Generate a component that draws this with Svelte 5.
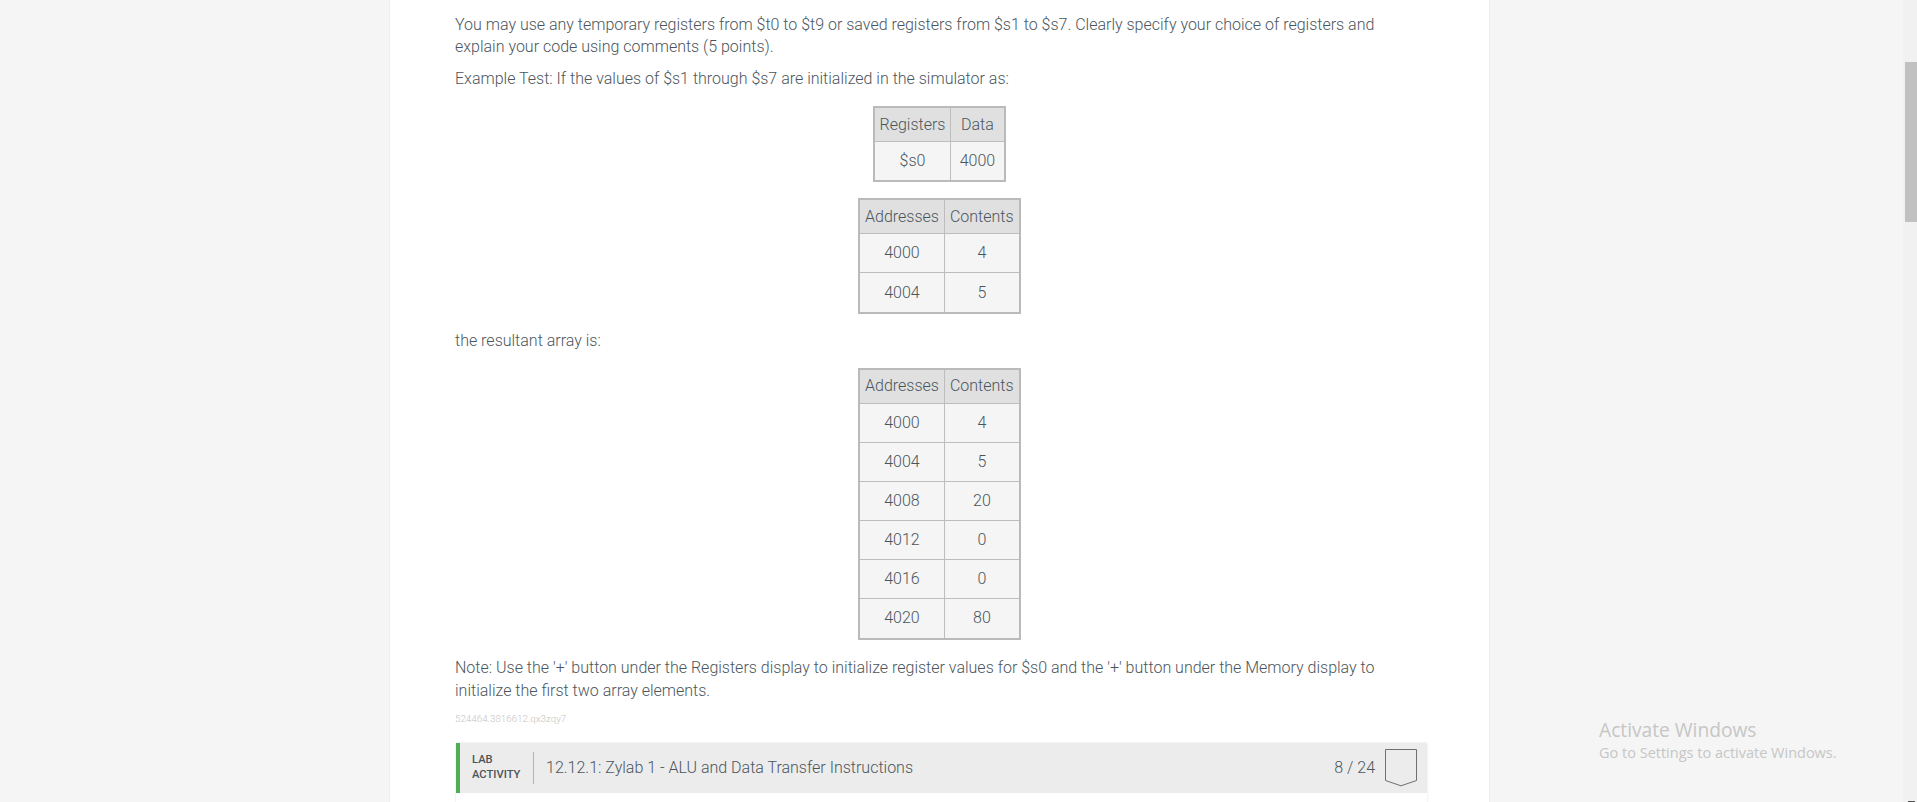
<script>
  const regs = [['$s0', '4000']];
  const mem = [['4000', '4'], ['4004', '5']];
  const result = [['4000', '4'], ['4004', '5'], ['4008', '20'], ['4012', '0'], ['4016', '0'], ['4020', '80']];
</script>

<div class="page">
  <main class="panel">
    <p>You may use any temporary registers from $t0 to $t9 or saved registers from $s1 to $s7. Clearly specify your choice of registers and explain your code using comments (5 points).</p>
    <p>Example Test: If the values of $s1 through $s7 are initialized in the simulator as:</p>

    <table class="regs">
      <thead><tr><th>Registers</th><th class="data">Data</th></tr></thead>
      <tbody>
        {#each regs as r}<tr><td>{r[0]}</td><td>{r[1]}</td></tr>{/each}
      </tbody>
    </table>

    <table class="mem">
      <thead><tr><th>Addresses</th><th>Contents</th></tr></thead>
      <tbody>
        {#each mem as r}<tr><td>{r[0]}</td><td>{r[1]}</td></tr>{/each}
      </tbody>
    </table>

    <p>the resultant array is:</p>

    <table class="mem result">
      <thead><tr><th>Addresses</th><th>Contents</th></tr></thead>
      <tbody>
        {#each result as r}<tr><td>{r[0]}</td><td>{r[1]}</td></tr>{/each}
      </tbody>
    </table>

    <p>Note: Use the '+' button under the Registers display to initialize register values for $s0 and the '+' button under the Memory display to initialize the first two array elements.</p>
    <div class="code-id">524464.3816612.qx3zqy7</div>

    <section class="lab">
      <header class="lab-head">
        <div class="lab-kind">LAB<br />ACTIVITY</div>
        <div class="lab-title">12.12.1: Zylab 1 - ALU and Data Transfer Instructions</div>
        <div class="lab-score">8 / 24</div>
        <svg class="badge" width="32" height="38" viewBox="0 0 32 38" aria-hidden="true">
          <path d="M0.5 0.5H31.5V31.5L16 36.8L0.5 31.5Z" fill="none" stroke="#6f6f6f" />
        </svg>
      </header>
      <div class="lab-body"></div>
    </section>
  </main>

  <div class="watermark">
    <div class="wm-title">Activate Windows</div>
    <div class="wm-sub">Go to Settings to activate Windows.</div>
  </div>

  <div class="scrollbar">
    <div class="thumb"></div>
    <div class="arrow"></div>
  </div>
</div>

<style>
  :global(body) {
    margin: 0;
    background: #f5f5f5;
  }
  .page {
    position: relative;
    height: 802px;
    overflow: hidden;
    background: #f5f5f5;
    font-family: Roboto, "Liberation Sans", sans-serif;
    font-weight: 300;
    font-size: 16px;
    line-height: 22.4px;
    color: #4b565c;
  }
  .panel {
    box-sizing: border-box;
    width: 1101px;
    height: 802px;
    margin-left: 389px;
    padding: 13.5px 66px 0 65px;
    background: #fff;
    border-left: 1px solid #eeeeee;
    border-right: 1px solid #eeeeee;
  }
  p {
    margin: 0 0 9.5px;
  }
  table {
    border-collapse: collapse;
    border: 2px solid #bababa;
    margin: 16px 0;
    text-align: center;
  }
  th, td {
    border: 1px solid #bdbdbd;
    padding: 0 5px;
    font-weight: 300;
    line-height: 22px;
  }
  th {
    background: #e0e0e0;
    height: 33px;
  }
  td {
    background: #f5f5f5;
    height: 38px;
  }
  .regs {
    margin-left: 418px;
  }
  .regs th:first-child {
    padding: 0 4.5px;
  }
  .regs th.data {
    width: 43px;
  }
  .mem {
    margin-left: 403px;
  }
  .mem th:last-child {
    padding-right: 5.5px;
  }
  .mem tbody tr:last-child td {
    height: 39px;
  }
  .result {
    margin-top: 15px;
    margin-bottom: 17.5px;
  }
  .code-id {
    margin-top: 11px;
    font-size: 9.8px;
    line-height: 12px;
    color: #c4c4c4;
  }
  .lab {
    margin: 18px 0 0 1px;
    width: 971px;
    box-shadow: 0 0 2px rgba(0, 0, 0, 0.12);
  }
  .lab-head {
    display: flex;
    align-items: center;
    height: 50px;
    background: #ececec;
    border-left: 4px solid #50ae54;
    box-sizing: border-box;
  }
  .lab-kind {
    width: 61px;
    height: 32px;
    margin-left: 12px;
    border-right: 1px solid #b4b4b4;
    font-weight: 500;
    font-size: 11.2px;
    line-height: 15px;
    color: #4d5358;
    flex: none;
  }
  .lab-title {
    margin-left: 12px;
    flex: 1;
  }
  .lab-score {
    margin-right: 10px;
  }
  .badge {
    margin-right: 10px;
    flex: none;
  }
  .lab-body {
    height: 20px;
    background: #fff;
  }
  .watermark {
    position: absolute;
    left: 1599px;
    top: 716px;
    color: #c6c6c6;
    font-family: "Open Sans", sans-serif;
    font-weight: 400;
  }
  .wm-title {
    font-size: 19.2px;
    line-height: 28px;
  }
  .wm-sub {
    font-size: 14.5px;
    line-height: 18px;
  }
  .scrollbar {
    position: absolute;
    top: 0;
    right: 0;
    bottom: 0;
    width: 14px;
    background: #f1f1f1;
  }
  .thumb {
    position: absolute;
    top: 62px;
    left: 2px;
    right: 0;
    height: 160px;
    background: #c1c1c1;
  }
  .arrow {
    position: absolute;
    left: 5px;
    bottom: 0;
    width: 7px;
    height: 1px;
    background: #505050;
  }
</style>
